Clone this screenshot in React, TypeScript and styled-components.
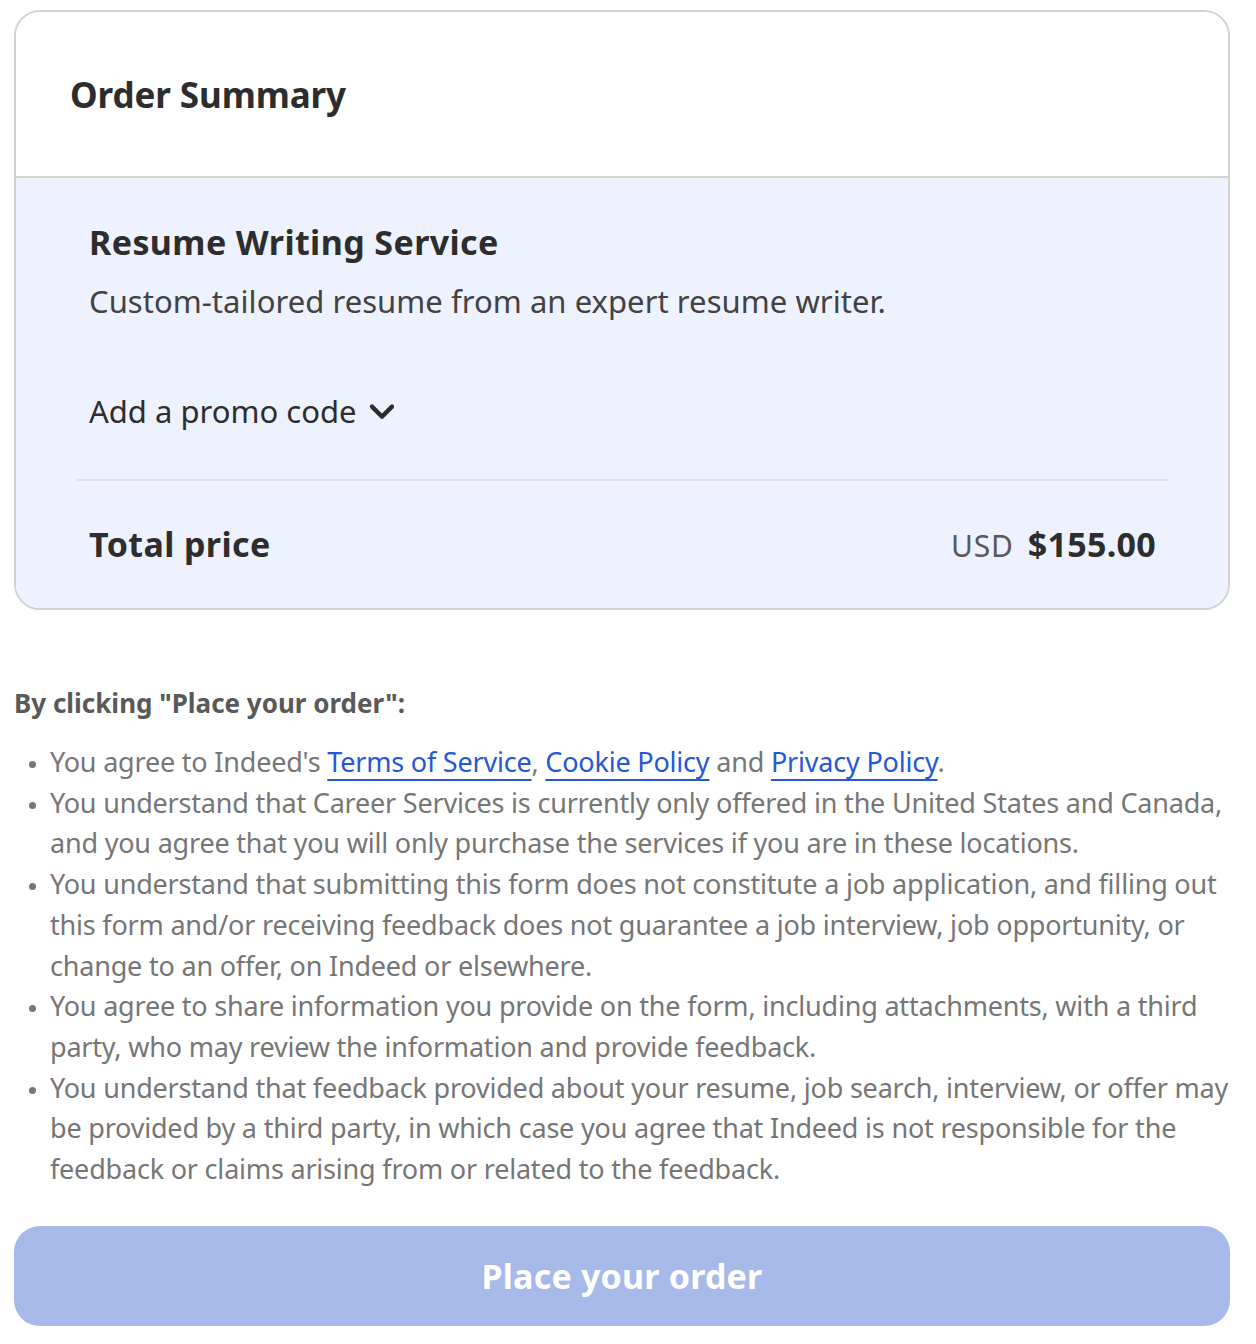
import styled, {createGlobalStyle} from 'styled-components';

const GlobalStyle = createGlobalStyle`
  html, body {
    margin: 0;
    padding: 0;
    background: #ffffff;
  }
  body {
    font-family: "Noto Sans", "Open Sans", sans-serif;
    color: #2d2d2d;
  }
`;

const Page = styled.div`
  padding: 10px 26px 20px 14px;
  display: flex;
  flex-direction: column;
`;

const Card = styled.section`
  border: 2px solid #d4d2d0;
  border-radius: 26px;
  overflow: hidden;
`;

const CardHeader = styled.header`
  height: 164px;
  display: flex;
  align-items: center;
  padding-left: 54px;
  border-bottom: 2px solid #d4d2d0;
  background: #ffffff;
`;

const HeaderTitle = styled.h1`
  margin: 0;
  font-size: 35px;
  font-weight: 700;
  letter-spacing: -0.1px;
  color: #2d2d2d;
`;

const CardBody = styled.div`
  background: #eef1fe;
  padding: 40px 61px 40px;
  display: flex;
  flex-direction: column;
`;

const ProductBlock = styled.div`
  padding: 0 12px;
  display: flex;
  flex-direction: column;
`;

const ProductTitle = styled.h2`
  margin: 0;
  font-size: 34px;
  font-weight: 700;
  letter-spacing: 0.4px;
  line-height: 48px;
  color: #2d2d2d;
`;

const ProductDesc = styled.p`
  margin: 13px 0 0;
  font-size: 31px;
  line-height: 44px;
  letter-spacing: 0.05px;
  color: #424242;
`;

const PromoToggle = styled.button`
  margin: 66px 0 46px;
  padding: 0;
  border: none;
  background: none;
  display: flex;
  align-items: center;
  gap: 11px;
  font-family: inherit;
  font-size: 31px;
  line-height: 44px;
  letter-spacing: 0;
  color: #2d2d2d;
  cursor: pointer;
  align-self: flex-start;
`;

const Divider = styled.hr`
  margin: 0;
  border: none;
  border-top: 2px solid #e0e0e4;
`;

const TotalRow = styled.div`
  padding: 39px 11px 0 12px;
  display: flex;
  align-items: center;
  justify-content: space-between;
`;

const TotalLabel = styled.span`
  font-size: 34px;
  font-weight: 700;
  letter-spacing: 0.4px;
  line-height: 48px;
`;

const Price = styled.span`
  display: flex;
  align-items: baseline;
  gap: 14px;
`;

const Currency = styled.span`
  font-size: 30px;
  color: #595959;
  letter-spacing: 0.8px;
`;

const Amount = styled.span`
  font-size: 34px;
  font-weight: 700;
  letter-spacing: 0.3px;
  color: #2d2d2d;
`;

const Legal = styled.div`
  margin-top: 75px;
  margin-right: -12px;
  color: #767676;
`;

const LegalTitle = styled.p`
  margin: 0;
  font-size: 26px;
  font-weight: 700;
  line-height: 36px;
  letter-spacing: 0;
  color: #595959;
`;

const TermsList = styled.ul`
  margin: 21px 0 0;
  padding-left: 36px;
  font-size: 27px;
  line-height: 40.7px;
  letter-spacing: -0.2px;

  li::marker {
    font-size: 20px;
  }
`;

const TermLink = styled.a`
  color: #2557d6;
  text-decoration: underline;
  text-underline-offset: 7px;
  text-decoration-thickness: 2px;
`;

const OrderButton = styled.button`
  margin-top: 36px;
  height: 100px;
  border: none;
  border-radius: 26px;
  background: #a7b9e8;
  color: #ffffff;
  font-family: inherit;
  font-size: 34px;
  font-weight: 700;
  letter-spacing: 0.2px;
  cursor: not-allowed;
`;

function Chevron() {
  return (
    <svg width="30" height="30" viewBox="0 0 24 24" fill="none">
      <path d="M4 8.5l8 8 8-8" stroke="#2d2d2d" strokeWidth="3.4" strokeLinecap="round" strokeLinejoin="round"/>
    </svg>
  );
}

export default function App() {
  return (
    <Page>
      <GlobalStyle/>
      <Card>
        <CardHeader>
          <HeaderTitle>Order Summary</HeaderTitle>
        </CardHeader>
        <CardBody>
          <ProductBlock>
            <ProductTitle>Resume Writing Service</ProductTitle>
            <ProductDesc>Custom-tailored resume from an expert resume writer.</ProductDesc>
            <PromoToggle type="button">
              Add a promo code
              <Chevron/>
            </PromoToggle>
          </ProductBlock>
          <Divider/>
          <TotalRow>
            <TotalLabel>Total price</TotalLabel>
            <Price>
              <Currency>USD</Currency>
              <Amount>$155.00</Amount>
            </Price>
          </TotalRow>
        </CardBody>
      </Card>
      <Legal>
        <LegalTitle>By clicking "Place your order":</LegalTitle>
        <TermsList>
          <li>
            You agree to Indeed's <TermLink href="#">Terms of Service</TermLink>, <TermLink href="#">Cookie Policy</TermLink> and <TermLink href="#">Privacy Policy</TermLink>.
          </li>
          <li>
            You understand that Career Services is currently only offered in the United States and Canada, and you agree that you will only purchase the services if you are in these locations.
          </li>
          <li>
            You understand that submitting this form does not constitute a job application, and filling out this form and/or receiving feedback does not guarantee a job interview, job opportunity, or change to an offer, on Indeed or elsewhere.
          </li>
          <li>
            You agree to share information you provide on the form, including attachments, with a third party, who may review the information and provide feedback.
          </li>
          <li>
            You understand that feedback provided about your resume, job search, interview, or offer may be provided by a third party, in which case you agree that Indeed is not responsible for the feedback or claims arising from or related to the feedback.
          </li>
        </TermsList>
      </Legal>
      <OrderButton type="button">Place your order</OrderButton>
    </Page>
  );
}
